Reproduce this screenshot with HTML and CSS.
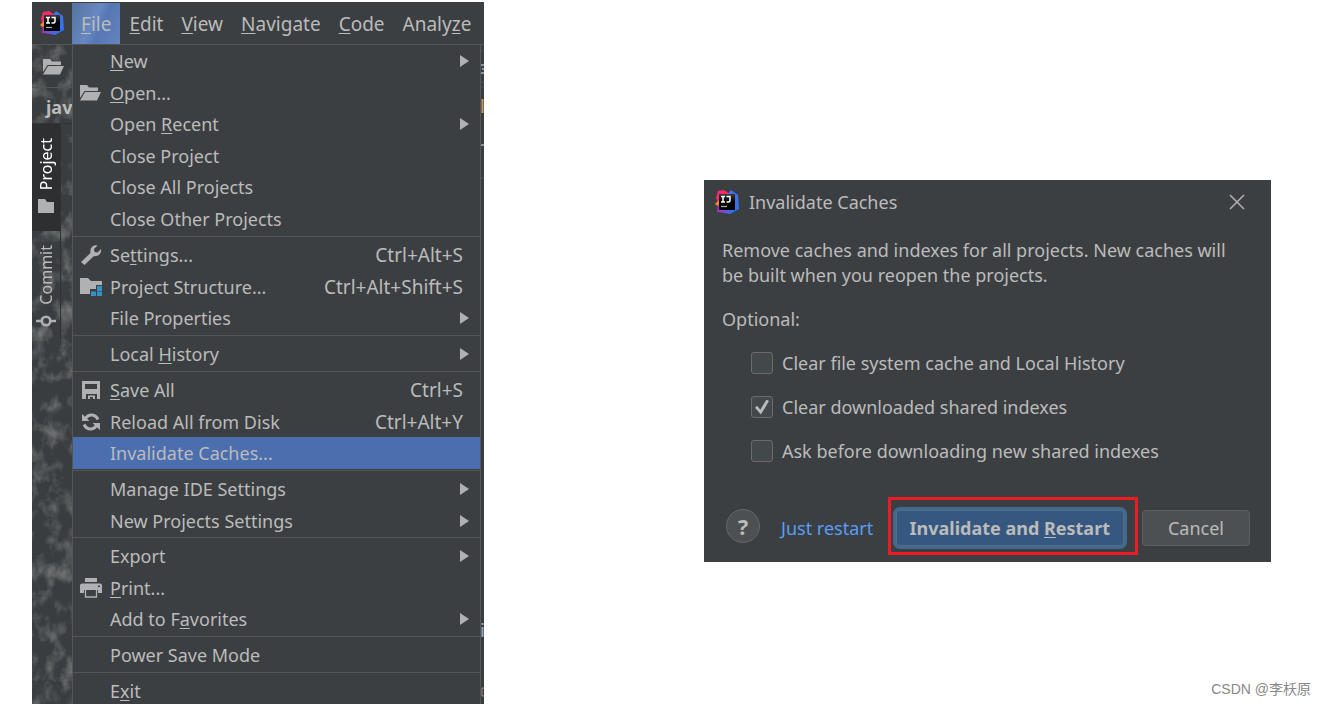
FILE: index.html
```html
<!DOCTYPE html>
<html lang="en">
<head>
<meta charset="utf-8">
<title>Invalidate Caches</title>
<link rel="stylesheet" href="styles.css">
</head>
<body>
<svg class="defs" aria-hidden="true">
  <defs>
    <linearGradient id="lg-pink" x1="0" y1="0" x2="1" y2="1"><stop offset="0" stop-color="#ff2d6b"/><stop offset="1" stop-color="#f0206e"/></linearGradient>
    <linearGradient id="lg-blue" x1="0" y1="0" x2="0" y2="1"><stop offset="0" stop-color="#4a6fe8"/><stop offset="1" stop-color="#2474f5"/></linearGradient>
    <linearGradient id="lg-violet" x1="0" y1="0" x2="1" y2="0"><stop offset="0" stop-color="#b02fb8"/><stop offset="1" stop-color="#3d6df0"/></linearGradient>
    <linearGradient id="lg-black" x1="0" y1="0" x2="0" y2="1"><stop offset="0" stop-color="#3a3a3a"/><stop offset=".5" stop-color="#000"/></linearGradient>
    <symbol id="logo" viewBox="0 0 24 24">
      <path d="M3 1 9 0l6 4-2 10H4L1 8z" fill="url(#lg-pink)"/>
      <path d="M0 14l5-5v9z" fill="#ff8a1f"/>
      <path d="M12 5l4-5 7 5 1 14-9 5-4-4z" fill="url(#lg-blue)"/>
      <path d="M3 15h14l-2 9-5-1-8-1z" fill="url(#lg-violet)"/>
      <path d="M4 4h16v16H4z" fill="url(#lg-black)"/>
      <path d="M6 6.500h4M8 6.500v5.500M6 12h4M11.500 6.500H15v4q0 1.500-1.500 1.500h-2" fill="none" stroke="#fff" stroke-width="1.500"/>
      <path d="M6 16.500h6" stroke="#aaa" stroke-width="1.300"/>
    </symbol>
    <symbol id="open" viewBox="0 0 22 16">
      <path d="M0 0h7l2 2.500h9V6H4.500L0 13z" fill="#afb1b3"/>
      <path d="M5 7h16l-4 8.500H0z" fill="#afb1b3"/>
    </symbol>
    <symbol id="arrow" viewBox="0 0 9 12"><path d="M0 0l9 6-9 6z" fill="#afb1b3"/></symbol>
    <filter id="bark" x="0" y="0" width="100%" height="100%">
      <feTurbulence type="fractalNoise" baseFrequency=".07 .05" numOctaves="4" seed="8"/>
      <feColorMatrix values="0 0 0 0 .42  0 0 0 0 .42  0 0 0 0 .42  2.400 0 0 0 -1.100"/>
    </filter>
  </defs>
</svg>

<main class="stage">
  <section class="ide">
    <svg class="texture" aria-hidden="true"><rect width="100%" height="100%" filter="url(#bark)"/></svg>
    <nav class="menubar">
      <span class="brand"><svg width="24" height="24"><use href="#logo"/></svg></span>
      <button class="top active"><u>F</u>ile</button>
      <button class="top"><u>E</u>dit</button>
      <button class="top"><u>V</u>iew</button>
      <button class="top"><u>N</u>avigate</button>
      <button class="top"><u>C</u>ode</button>
      <button class="top">Analy<u>z</u>e</button>
    </nav>
    <div class="work">
      <aside class="rail">
        <button class="tool" aria-label="Open"><svg width="22" height="16"><use href="#open"/></svg></button>
        <div class="crumb">jav</div>
        <button class="tab selected"><span>Project</span>
          <svg width="16" height="14" viewBox="0 0 16 14"><path d="M0 0h7l2 3h7v11H0z" fill="#afb1b3"/></svg></button>
        <button class="tab"><span>Commit</span>
          <svg width="20" height="14" viewBox="0 0 20 14"><path d="M0 7h5M15 7h5" stroke="#afb1b3" stroke-width="2.500"/><circle cx="10" cy="7" r="4.300" fill="none" stroke="#afb1b3" stroke-width="2.600"/></svg></button>
      </aside>
      <div class="menu">
        <ul class="group">
          <li><button class="item"><i></i><span><u>N</u>ew</span><svg class="arrow"><use href="#arrow"/></svg></button></li>
          <li><button class="item"><i><svg width="22" height="16"><use href="#open"/></svg></i><span><u>O</u>pen...</span></button></li>
          <li><button class="item"><i></i><span>Open <u>R</u>ecent</span><svg class="arrow"><use href="#arrow"/></svg></button></li>
          <li><button class="item"><i></i><span>Close Project</span></button></li>
          <li><button class="item"><i></i><span>Close All Projects</span></button></li>
          <li><button class="item"><i></i><span>Close Other Projects</span></button></li>
        </ul>
        <ul class="group">
          <li><button class="item"><i><svg width="22" height="22" viewBox="0 0 22 22"><path d="M1 18 10.500 9C9.500 4.500 13 .5 17.500 1.500L14 5l.5 3 3 .5 3.500-3.500c1 4.500-3 8-7 7L4.500 21z" fill="#afb1b3"/></svg></i><span>Se<u>t</u>tings...</span><kbd>Ctrl+Alt+S</kbd></button></li>
          <li><button class="item"><i><svg width="22" height="18" viewBox="0 0 22 18"><path d="M0 0h8l3 3h11v4h-6v4h-6v5H0z" fill="#afb1b3"/><path d="M17 8h5v5h-5zM11 13.500h5V18h-5zM17 13.500h5V18h-5z" fill="#3592c4"/></svg></i><span>Project Structure...</span><kbd>Ctrl+Alt+Shift+S</kbd></button></li>
          <li><button class="item"><i></i><span>File Properties</span><svg class="arrow"><use href="#arrow"/></svg></button></li>
        </ul>
        <ul class="group">
          <li><button class="item"><i></i><span>Local <u>H</u>istory</span><svg class="arrow"><use href="#arrow"/></svg></button></li>
        </ul>
        <ul class="group">
          <li><button class="item"><i><svg width="20" height="18" viewBox="0 0 20 18"><path d="M1 0h18v18h-3v-5H5v5H1zM4 3v5h12V3z" fill="#afb1b3" fill-rule="evenodd"/><path d="M7 14.500h7V18h-2v-2h-3v2H7z" fill="#afb1b3"/></svg></i><span><u>S</u>ave All</span><kbd>Ctrl+S</kbd></button></li>
          <li><button class="item"><i><svg width="20" height="18" viewBox="0 0 20 18"><path d="M4 6.500C7 .5 14 .5 17 6.500M16 11.500C13 17.500 6 17.500 3 11.500" fill="none" stroke="#afb1b3" stroke-width="3"/><path d="M1 1v7h7.500zM19 17v-7h-7.500z" fill="#afb1b3"/></svg></i><span>Reload All from Disk</span><kbd>Ctrl+Alt+Y</kbd></button></li>
          <li><button class="item chosen"><i></i><span>Invalidate Caches...</span></button></li>
        </ul>
        <ul class="group">
          <li><button class="item"><i></i><span>Manage IDE Settings</span><svg class="arrow"><use href="#arrow"/></svg></button></li>
          <li><button class="item"><i></i><span>New Projects Settings</span><svg class="arrow"><use href="#arrow"/></svg></button></li>
        </ul>
        <ul class="group">
          <li><button class="item"><i></i><span>Export</span><svg class="arrow"><use href="#arrow"/></svg></button></li>
          <li><button class="item"><i><svg width="22" height="20" viewBox="0 0 22 20"><path d="M5 0h12v4H5zM2 5.500h18q2 0 2 2V15h-4v-3H4v3H0V7.500q0-2 2-2z" fill="#afb1b3"/><path d="M5.500 12v7h11v-7" fill="none" stroke="#afb1b3" stroke-width="1.300"/><path d="M18 7.500h2v1.500h-2z" fill="#3c3f41"/></svg></i><span><u>P</u>rint...</span></button></li>
          <li><button class="item"><i></i><span>Add to F<u>a</u>vorites</span><svg class="arrow"><use href="#arrow"/></svg></button></li>
        </ul>
        <ul class="group">
          <li><button class="item"><i></i><span>Power Save Mode</span></button></li>
        </ul>
        <ul class="group">
          <li><button class="item"><i></i><span>E<u>x</u>it</span></button></li>
        </ul>
      </div>
      <svg class="edge" width="3" height="660" viewBox="0 0 3 660" aria-hidden="true">
        <path d="M0 6h3M0 37h3M0 42h3M0 133h3" stroke="#515355"/>
        <path d="M0 20h3M1 24h2M0 28h3" stroke="#8795a3" stroke-width="2"/>
        <path d="M1.500 54v14" stroke="#c9975c" stroke-width="2"/>
        <path d="M0 100h3" stroke="#8d8f91" stroke-width="2"/>
        <path d="M1.500 582v10M1.500 578v2" stroke="#8fa3b5" stroke-width="2"/>
        <path d="M3 643H1v8h2" fill="none" stroke="#a09080"/>
      </svg>
    </div>
  </section>

  <section class="dialog" role="dialog" aria-labelledby="title">
    <header class="titlebar">
      <svg width="24" height="24"><use href="#logo"/></svg>
      <h1 id="title">Invalidate Caches</h1>
      <button class="close" aria-label="Close"><svg width="16" height="16" viewBox="0 0 16 16"><path d="M1 1l14 14M15 1 1 15" stroke="#afb1b3" stroke-width="1.500"/></svg></button>
    </header>
    <p class="message">Remove caches and indexes for all projects. New caches will be built when you reopen the projects.</p>
    <p class="optional">Optional:</p>
    <div class="options">
      <label><input type="checkbox"><span>Clear file system cache and Local History</span></label>
      <label><input type="checkbox" checked><span>Clear downloaded shared indexes</span></label>
      <label><input type="checkbox"><span>Ask before downloading new shared indexes</span></label>
    </div>
    <footer class="actions">
      <button class="help" aria-label="Help">?</button>
      <a class="link" href="#restart">Just restart</a>
      <div class="callout"><button class="primary">Invalidate and <u>R</u>estart</button></div>
      <button class="cancel">Cancel</button>
    </footer>
  </section>
</main>
<div class="watermark">CSDN @李枖原</div>
</body>
</html>
```
FILE: styles.css
```css
* { box-sizing: border-box; }
body {
  margin: 0;
  background: #fff;
  color: #bbb;
  font: 18px/24px "Noto Sans", "Open Sans", sans-serif;
}
button {
  margin: 0;
  padding: 0;
  border: 0;
  background: none;
  color: inherit;
  font: inherit;
}
u { text-decoration-thickness: 1px; text-underline-offset: 2px; }
svg { display: block; flex: none; }
.defs { position: absolute; width: 0; height: 0; }

.stage {
  display: grid;
  grid-template-columns: 452fr 567fr;
  column-gap: 220px;
  height: 100vh;
  padding: 2px 55px 2px 32px;
}

.ide {
  position: relative;
  display: flex;
  flex-direction: column;
  min-width: 0;
  overflow: hidden;
  background: #393d3f;
}
.texture { position: absolute; top: 0; left: 0; width: 90px; height: 100%; opacity: .5; }
.menubar {
  position: relative;
  display: flex;
  flex: none;
  height: 43px;
  padding-top: 1px;
  border-bottom: 1px solid #555;
  font-size: 19px;
}
.menubar::before { content: ""; position: absolute; inset: 0; background: #3c3f41; }
.brand { position: relative; display: grid; place-items: center; width: 40px; padding-bottom: 2px; }
.top { position: relative; padding: 0 9px; white-space: nowrap; }
.top.active { background: linear-gradient(115deg, #53749f, #6888c0 45%, #5577b4 60%, #6484bb); }

.work { position: relative; display: flex; flex: 1; min-height: 0; }
.rail { display: flex; flex-direction: column; width: 40px; overflow: hidden; }
.tool { display: flex; align-items: center; height: 43px; padding: 2px 0 0 11px; border-bottom: 1px solid #555; }
.crumb { height: 36px; padding: 7px 0 0 14px; border-bottom: 1px solid #323436; font-weight: bold; }
.tab {
  display: flex;
  flex-direction: column;
  align-items: center;
  gap: 9px;
  width: 29px;
  padding: 14px 0;
  border-right: 1px solid #303335;
  font-size: 16px;
}
.tab span { writing-mode: vertical-rl; transform: rotate(180deg); }
.tab.selected { height: 107px; padding-bottom: 0; background: #2d2f30; color: #fff; }

.menu { flex: 1; min-width: 0; background: #3c3f41; border: solid #555; border-width: 0 1px; }
.edge { align-self: flex-start; }
.group { margin: 0; padding: 2px 0 1px; border-top: 1px solid #555; list-style: none; }
.group:first-child { padding: 0 0 2px; border-top: 0; }
.item {
  display: flex;
  align-items: center;
  width: 100%;
  height: 32px;
  padding-right: 11px;
  text-align: left;
  white-space: nowrap;
}
li:nth-child(even) .item { height: 31px; }
.item i { display: flex; justify-content: center; width: 37px; padding-right: 2px; }
.item kbd { margin-left: auto; padding-right: 6px; font: inherit; font-size: 19px; }
.arrow { width: 9px; height: 12px; margin-left: auto; }
.chosen { background: #4b6eaf; }

.dialog {
  align-self: start;
  min-width: 0;
  margin-top: 178px;
  padding: 9px 21px 7px 18px;
  background: #3c3f41;
}
.titlebar { display: flex; align-items: center; gap: 10px; height: 26px; margin-left: -7px; }
h1 { margin: 0; font: inherit; }
.close { margin-left: auto; padding-right: 5px; }
.message { margin: 23px 0 0; line-height: 25px; }
.optional { margin: 19px 0 0; }
.options { display: grid; gap: 20px; margin: 20px 0 0 29px; }
label { display: flex; align-items: center; gap: 9px; }
input {
  display: grid;
  place-items: center;
  width: 22px;
  height: 22px;
  margin: 0;
  appearance: none;
  border: 1px solid #6b6b6b;
  border-radius: 3px;
  background: #43494a;
}
input:checked::before {
  content: "";
  width: 14px;
  height: 15px;
  background: #bbb;
  clip-path: polygon(0 55%, 15% 42%, 38% 68%, 82% 0, 100% 10%, 42% 100%);
}
.actions { display: flex; align-items: baseline; height: 58px; margin-top: 34px; padding-left: 4px; }
.help {
  width: 34px;
  height: 34px;
  border: 1px solid #666;
  border-radius: 50%;
  background: #4c5052;
  font-size: 22px;
  font-weight: bold;
}
.link { margin: 0 auto 0 21px; color: #589df6; text-decoration: none; white-space: nowrap; }
.callout { margin-right: 4px; padding: 7px 8px 3px 2px; border: 3px solid #ed1c24; }
.primary {
  height: 42px;
  padding: 0 14px;
  border: 3px solid #43698e;
  border-radius: 7px;
  background: #365880;
  box-shadow: inset 0 0 0 1px #4c708c;
  font-weight: bold;
  white-space: nowrap;
}
.cancel {
  width: 108px;
  height: 36px;
  border: 1px solid #5e6060;
  border-radius: 4px;
  background: #4c5052;
}
.watermark {
  position: absolute;
  right: 15px;
  bottom: 6px;
  color: #888;
  font: 14px/22px "Liberation Sans", "Noto Sans CJK SC", sans-serif;
}
```
